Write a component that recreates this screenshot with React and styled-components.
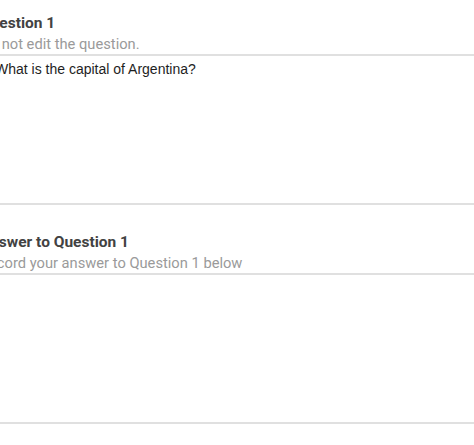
import React from "react";
import styled, { createGlobalStyle } from "styled-components";

const Global = createGlobalStyle`
  html, body { margin: 0; padding: 0; background: #fff; overflow: hidden; }
  body { font-family: Roboto, "Liberation Sans", sans-serif; }
`;

const Page = styled.div`
  margin-left: -20px;
  width: 540px;
  padding-top: 13px;
  display: flex;
  flex-direction: column;
  gap: 27px;
`;

const Field = styled.section`
  display: flex;
  flex-direction: column;
`;

const Label = styled.div`
  font-family: Roboto, "Liberation Sans", sans-serif;
  font-weight: 700;
  font-size: 15.5px;
  line-height: 20px;
  color: #424242;
`;

const Hint = styled.div`
  font-family: Roboto, "Liberation Sans", sans-serif;
  font-size: 14.7px;
  line-height: 19px;
  margin-top: 2px;
  color: #9a9a9a;
`;

const Area = styled.textarea`
  box-sizing: border-box;
  display: block;
  width: 100%;
  height: 151px;
  margin: 0;
  padding: 5px 13px;
  border: 2px solid #e0e0e0;
  border-radius: 0;
  resize: none;
  outline: none;
  background: #fff;
  font-family: "Liberation Sans", Arial, sans-serif;
  font-size: 14px;
  line-height: 16px;
  color: #1e1e1e;
`;

export default function App() {
  return (
    <>
      <Global />
      <Page>
        <Field>
          <Label>Question 1</Label>
          <Hint>Do not edit the question.</Hint>
          <Area readOnly defaultValue="What is the capital of Argentina?" />
        </Field>
        <Field>
          <Label>Answer to Question 1</Label>
          <Hint>Record your answer to Question 1 below</Hint>
          <Area defaultValue="" />
        </Field>
      </Page>
    </>
  );
}
